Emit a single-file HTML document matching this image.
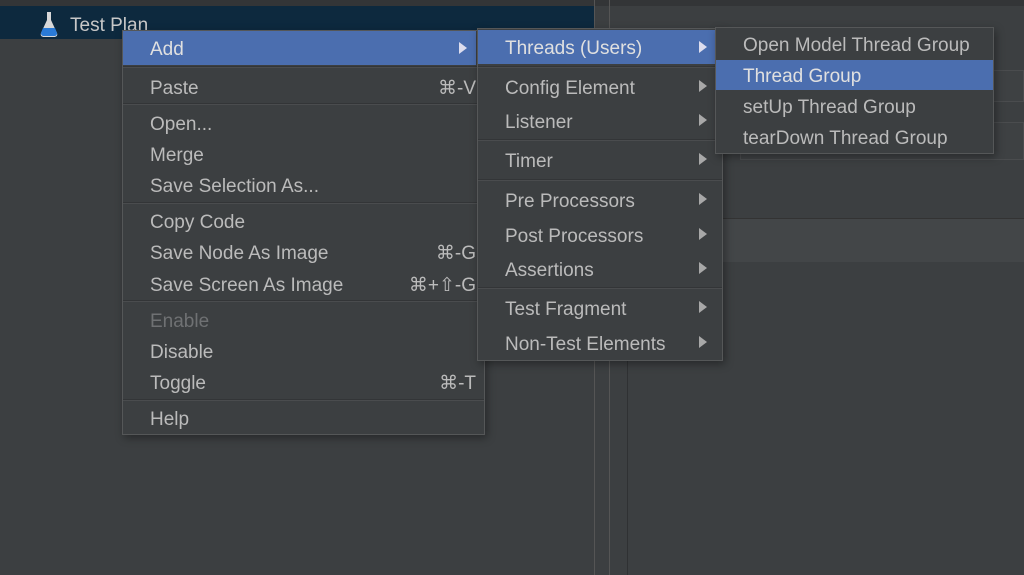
<!DOCTYPE html>
<html><head><meta charset="utf-8"><style>
*{margin:0;padding:0;box-sizing:border-box}
body{width:1024px;height:575px;background:#3c3f41;position:relative;overflow:hidden;font-family:"Liberation Sans",sans-serif;color:#bbbbbb;font-size:19px}
.a{position:absolute}
.m{position:absolute;background:#3c3f41;border:1px solid #555758;box-shadow:2px 3px 8px rgba(0,0,0,.35)}
.t,.k{position:absolute;line-height:22px;white-space:nowrap;margin-top:2px}
.k{text-align:right}
.h{position:absolute;background:#4b6eaf}
.s{position:absolute;height:2px;background:#4a4c4e;border-top:1px solid #333537}
.ar{position:absolute;width:0;height:0;border-left:8px solid #a8a8a8;border-top:6px solid transparent;border-bottom:6px solid transparent}
</style></head><body>
<div class="a" style="left:0;top:0;width:1024px;height:6px;background:#333537"></div>
<div class="a" style="left:0;top:6px;width:594px;height:33px;background:#0d293e"></div>
<div class="a" style="left:594px;top:0;width:1px;height:575px;background:#555"></div>
<div class="a" style="left:609px;top:0;width:1px;height:575px;background:#555"></div>
<div class="a" style="left:627px;top:30px;width:1px;height:545px;background:#2f3133"></div>
<div class="a" style="left:740px;top:70px;width:284px;height:32px;border:1px solid #4a4c4e;background:#3e4143"></div>
<div class="a" style="left:740px;top:122px;width:284px;height:38px;border:1px solid #4a4c4e;background:#3e4143"></div>
<div class="a" style="left:609px;top:218px;width:415px;height:44px;background:#434648;border-top:1px solid #333"></div>
<svg class="a" style="left:38px;top:9px" width="22" height="30" viewBox="0 0 22 30"><path d="M9 3h4v8l6 13c1 3-1 4-3 4H6c-2 0-4-1-3-4l6-13z" fill="#d8d8d8"/><path d="M5 19h12l2 5c0 2-1 3-3 3H6c-2 0-3-1-3-3z" fill="#2a7ad6"/></svg>
<div class="t" style="left:70px;top:13px;color:#c8c8c8">Test Plan</div>

<div class="m" style="left:122px;top:30px;width:363px;height:405px"></div>
<div class="h" style="left:123px;top:31px;width:353px;height:34px"></div>
<div class="t" style="left:150px;top:37px;color:#e0e0e0">Add</div>
<div class="ar" style="left:459px;top:42px;border-left-color:#dde"></div>
<div class="s" style="left:123px;top:66px;width:361px"></div>
<div class="t" style="left:150px;top:76px">Paste</div><div class="k" style="right:548px;top:76px">⌘-V</div>
<div class="s" style="left:123px;top:103px;width:361px"></div>
<div class="t" style="left:150px;top:112px">Open...</div>
<div class="t" style="left:150px;top:143px">Merge</div>
<div class="t" style="left:150px;top:174px">Save Selection As...</div>
<div class="s" style="left:123px;top:202px;width:361px"></div>
<div class="t" style="left:150px;top:210px">Copy Code</div>
<div class="t" style="left:150px;top:241px">Save Node As Image</div><div class="k" style="right:548px;top:241px">⌘-G</div>
<div class="t" style="left:150px;top:273px">Save Screen As Image</div><div class="k" style="right:548px;top:273px">⌘+⇧-G</div>
<div class="s" style="left:123px;top:300px;width:361px"></div>
<div class="t" style="left:150px;top:309px;color:#6f7173">Enable</div>
<div class="t" style="left:150px;top:340px">Disable</div>
<div class="t" style="left:150px;top:371px">Toggle</div><div class="k" style="right:548px;top:371px">⌘-T</div>
<div class="s" style="left:123px;top:399px;width:361px"></div>
<div class="t" style="left:150px;top:407px">Help</div>

<div class="m" style="left:477px;top:28px;width:246px;height:333px"></div>
<div class="h" style="left:478px;top:30px;width:238px;height:34px"></div>
<div class="t" style="left:505px;top:36px;color:#e0e0e0">Threads (Users)</div>
<div class="ar" style="left:699px;top:41px;border-left-color:#dde"></div>
<div class="s" style="left:478px;top:66px;width:244px"></div>
<div class="t" style="left:505px;top:76px">Config Element</div><div class="ar" style="left:699px;top:80px"></div>
<div class="t" style="left:505px;top:110px">Listener</div><div class="ar" style="left:699px;top:114px"></div>
<div class="s" style="left:478px;top:139px;width:244px"></div>
<div class="t" style="left:505px;top:149px">Timer</div><div class="ar" style="left:699px;top:153px"></div>
<div class="s" style="left:478px;top:179px;width:244px"></div>
<div class="t" style="left:505px;top:189px">Pre Processors</div><div class="ar" style="left:699px;top:193px"></div>
<div class="t" style="left:505px;top:224px">Post Processors</div><div class="ar" style="left:699px;top:228px"></div>
<div class="t" style="left:505px;top:258px">Assertions</div><div class="ar" style="left:699px;top:262px"></div>
<div class="s" style="left:478px;top:287px;width:244px"></div>
<div class="t" style="left:505px;top:297px">Test Fragment</div><div class="ar" style="left:699px;top:301px"></div>
<div class="t" style="left:505px;top:332px">Non-Test Elements</div><div class="ar" style="left:699px;top:336px"></div>

<div class="m" style="left:715px;top:27px;width:279px;height:127px"></div>
<div class="h" style="left:716px;top:60px;width:277px;height:30px"></div>
<div class="t" style="left:743px;top:33px">Open Model Thread Group</div>
<div class="t" style="left:743px;top:64px;color:#e0e0e0">Thread Group</div>
<div class="t" style="left:743px;top:95px">setUp Thread Group</div>
<div class="t" style="left:743px;top:126px">tearDown Thread Group</div>
</body></html>
